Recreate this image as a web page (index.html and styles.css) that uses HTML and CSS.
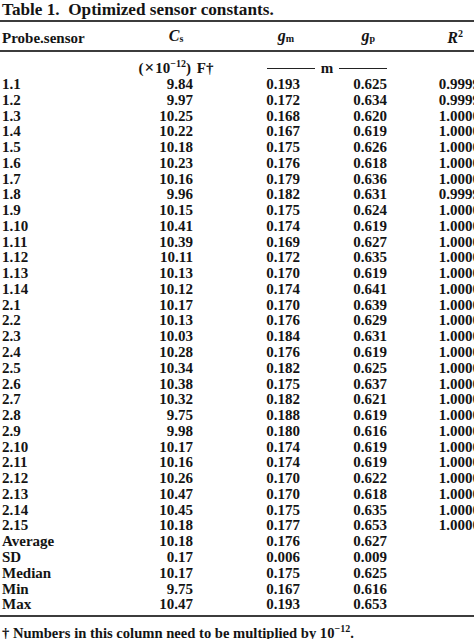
FILE: index.html
```html
<!DOCTYPE html>
<html lang="en">
<head>
<meta charset="utf-8">
<title>Table 1. Optimized sensor constants.</title>
<link rel="stylesheet" href="styles.css">
</head>
<body>
<div class="page">
  <h1 class="caption">Table 1.&nbsp; Optimized sensor constants.</h1>
  <table class="data">
    <colgroup>
      <col class="c1"><col class="c2"><col class="c3"><col class="c4"><col class="c5">
    </colgroup>
    <thead>
      <tr class="head">
        <th class="name">Probe.sensor</th>
        <th class="h-cs"><i>C</i><span class="sub">s</span></th>
        <th class="h-gm"><i>g</i><span class="sub">m</span></th>
        <th class="h-gp"><i>g</i><span class="sub">p</span></th>
        <th class="h-r2"><i>R</i><span class="sup">2</span></th>
      </tr>
    </thead>
    <tbody>
      <tr class="units">
        <td></td>
        <td class="u-cs">(<span class="times">×</span>10<span class="sup">−12</span>) F†</td>
        <td colspan="2"><div class="span-m"><span class="dash"></span><span>m</span><span class="dash"></span></div></td>
        <td></td>
      </tr>
      <tr><td>1.1</td><td>9.84</td><td>0.193</td><td>0.625</td><td>0.9999</td></tr>
      <tr><td>1.2</td><td>9.97</td><td>0.172</td><td>0.634</td><td>0.9999</td></tr>
      <tr><td>1.3</td><td>10.25</td><td>0.168</td><td>0.620</td><td>1.0000</td></tr>
      <tr><td>1.4</td><td>10.22</td><td>0.167</td><td>0.619</td><td>1.0000</td></tr>
      <tr><td>1.5</td><td>10.18</td><td>0.175</td><td>0.626</td><td>1.0000</td></tr>
      <tr><td>1.6</td><td>10.23</td><td>0.176</td><td>0.618</td><td>1.0000</td></tr>
      <tr><td>1.7</td><td>10.16</td><td>0.179</td><td>0.636</td><td>1.0000</td></tr>
      <tr><td>1.8</td><td>9.96</td><td>0.182</td><td>0.631</td><td>0.9999</td></tr>
      <tr><td>1.9</td><td>10.15</td><td>0.175</td><td>0.624</td><td>1.0000</td></tr>
      <tr><td>1.10</td><td>10.41</td><td>0.174</td><td>0.619</td><td>1.0000</td></tr>
      <tr><td>1.11</td><td>10.39</td><td>0.169</td><td>0.627</td><td>1.0000</td></tr>
      <tr><td>1.12</td><td>10.11</td><td>0.172</td><td>0.635</td><td>1.0000</td></tr>
      <tr><td>1.13</td><td>10.13</td><td>0.170</td><td>0.619</td><td>1.0000</td></tr>
      <tr><td>1.14</td><td>10.12</td><td>0.174</td><td>0.641</td><td>1.0000</td></tr>
      <tr><td>2.1</td><td>10.17</td><td>0.170</td><td>0.639</td><td>1.0000</td></tr>
      <tr><td>2.2</td><td>10.13</td><td>0.176</td><td>0.629</td><td>1.0000</td></tr>
      <tr><td>2.3</td><td>10.03</td><td>0.184</td><td>0.631</td><td>1.0000</td></tr>
      <tr><td>2.4</td><td>10.28</td><td>0.176</td><td>0.619</td><td>1.0000</td></tr>
      <tr><td>2.5</td><td>10.34</td><td>0.182</td><td>0.625</td><td>1.0000</td></tr>
      <tr><td>2.6</td><td>10.38</td><td>0.175</td><td>0.637</td><td>1.0000</td></tr>
      <tr><td>2.7</td><td>10.32</td><td>0.182</td><td>0.621</td><td>1.0000</td></tr>
      <tr><td>2.8</td><td>9.75</td><td>0.188</td><td>0.619</td><td>1.0000</td></tr>
      <tr><td>2.9</td><td>9.98</td><td>0.180</td><td>0.616</td><td>1.0000</td></tr>
      <tr><td>2.10</td><td>10.17</td><td>0.174</td><td>0.619</td><td>1.0000</td></tr>
      <tr><td>2.11</td><td>10.16</td><td>0.174</td><td>0.619</td><td>1.0000</td></tr>
      <tr><td>2.12</td><td>10.26</td><td>0.170</td><td>0.622</td><td>1.0000</td></tr>
      <tr><td>2.13</td><td>10.47</td><td>0.170</td><td>0.618</td><td>1.0000</td></tr>
      <tr><td>2.14</td><td>10.45</td><td>0.175</td><td>0.635</td><td>1.0000</td></tr>
      <tr><td>2.15</td><td>10.18</td><td>0.177</td><td>0.653</td><td>1.0000</td></tr>
      <tr><td>Average</td><td>10.18</td><td>0.176</td><td>0.627</td><td></td></tr>
      <tr><td>SD</td><td>0.17</td><td>0.006</td><td>0.009</td><td></td></tr>
      <tr><td>Median</td><td>10.17</td><td>0.175</td><td>0.625</td><td></td></tr>
      <tr><td>Min</td><td>9.75</td><td>0.167</td><td>0.616</td><td></td></tr>
      <tr class="last"><td>Max</td><td>10.47</td><td>0.193</td><td>0.653</td><td></td></tr>
    </tbody>
  </table>
  <p class="note">† Numbers in this column need to be multiplied by 10<span class="sup">−12</span>.</p>
</div>
</body>
</html>
```

FILE: styles.css
```css
html, body {
  margin: 0;
  padding: 0;
  background: #ffffff;
  overflow: hidden;
}

.page {
  width: 474px;
  height: 639px;
  overflow: hidden;
  font-family: "Liberation Serif", "Times New Roman", serif;
  font-weight: bold;
  color: #141414;
}

.caption {
  margin: 0;
  padding-left: 2px;
  font-size: 17.2px;
  line-height: 20px;
  font-weight: bold;
  white-space: nowrap;
}

.data {
  table-layout: fixed;
  width: 484px;
  border-collapse: separate;
  border-spacing: 0;
  border-top: 2px solid #3c3c3c;
  font-size: 15px;
}

.c1 { width: 138px; }
.c2 { width: 76px; }
.c3 { width: 100px; }
.c4 { width: 90px; }
.c5 { width: 80px; }

.data th,
.data td {
  padding: 0;
  font-weight: bold;
  white-space: nowrap;
  text-align: right;
  line-height: 15.76px;
}

.data td:nth-child(1) { text-align: left; padding-left: 2px; }
.data td:nth-child(2) { padding-right: 21px; }
.data td:nth-child(3) { padding-right: 14px; }
.data td:nth-child(4) { padding-right: 17px; }
.data td:nth-child(5) { padding-right: 4px; }

.head th {
  padding-top: 6px;
  padding-bottom: 3px;
  line-height: 16px;
  border-bottom: 2px solid #3c3c3c;
}

.head .name { text-align: left; padding-left: 2px; }
.head .h-cs { text-align: center; font-size: 16px; }
.head .h-gm { padding-right: 20px; font-size: 16px; }
.head .h-gp { padding-right: 29px; font-size: 16px; }
.head .h-r2 { padding-right: 21px; font-size: 16px; }

.sub {
  font-size: 10px;
  vertical-align: -1px;
  font-style: normal;
}

.sup {
  font-size: 10px;
  vertical-align: 6px;
  line-height: 0;
}

.times {
  font-size: 17px;
  line-height: 0;
  padding: 0 1px;
}

.units td {
  padding-top: 8px;
  padding-bottom: 1px;
  line-height: 16px;
}

.data .units td.u-cs {
  text-align: center;
  padding-right: 0;
  word-spacing: 2px;
}

.data .units td:nth-child(3) {
  padding-right: 0;
  text-align: left;
}

.span-m {
  display: flex;
  align-items: center;
  gap: 6px;
  width: 120px;
  margin-left: 53px;
}

.dash {
  flex: 1;
  height: 1px;
  background: #222;
  margin-top: 1px;
}

.last td {
  padding-bottom: 2px;
  border-bottom: 2px solid #3c3c3c;
}

.note {
  margin: 8px 0 0;
  padding-left: 2px;
  font-size: 14.6px;
  line-height: 16px;
  white-space: nowrap;
}
```
